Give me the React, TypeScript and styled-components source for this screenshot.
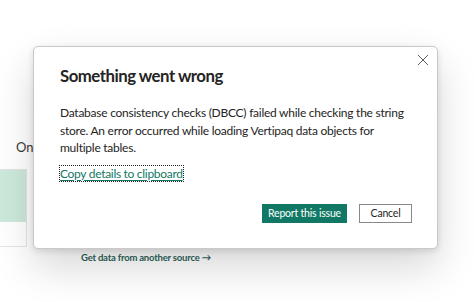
import React from "react";
import styled, { createGlobalStyle } from "styled-components";

const GlobalStyle = createGlobalStyle`
  html, body {
    margin: 0;
    padding: 0;
    background: #ffffff;
  }
  body {
    font-family: Lato, "Noto Sans", sans-serif;
    width: 474px;
    height: 302px;
    overflow: hidden;
  }
`;

const Screen = styled.div`
  position: relative;
  width: 474px;
  height: 302px;
  overflow: hidden;
  background: #ffffff;
`;

const BackPage = styled.div`
  display: flex;
  flex-direction: column;
  padding-top: 138px;
`;

const SectionLabel = styled.div`
  padding-left: 16px;
  font-size: 13px;
  line-height: 18px;
  color: #3b3b3b;
`;

const SourceCard = styled.div`
  margin-top: 13px;
  width: 26px;
  height: 76px;
  display: flex;
  flex-direction: column;
  border: 1px solid #e4e4e4;
  border-left: none;
  background: #ffffff;
`;

const CardFill = styled.div`
  height: 52px;
  background: #cce9db;
`;

const MoreLink = styled.div`
  margin-top: 5px;
  padding-left: 81px;
  font-size: 9.5px;
  letter-spacing: -0.2px;
  font-weight: 700;
  color: #2a5f57;
`;

const Backdrop = styled.div`
  position: absolute;
  inset: 0;
  padding: 46px 36px 0 33px;
`;

const Dialog = styled.div`
  position: relative;
  width: 405px;
  height: 203px;
  box-sizing: border-box;
  padding: 16px 25px 0 26px;
  background: #ffffff;
  border: 1px solid #c9c9c9;
  border-radius: 5px;
  box-shadow: 0 18px 40px rgba(0, 0, 0, 0.16), 0 2px 6px rgba(0, 0, 0, 0.12);
  display: flex;
  flex-direction: column;
`;

const CloseButton = styled.button`
  position: absolute;
  top: 5px;
  right: 6px;
  width: 16px;
  height: 16px;
  padding: 0;
  border: none;
  background: none;
  display: flex;
  align-items: center;
  justify-content: center;
`;

const Title = styled.h1`
  margin: 0;
  font-size: 16.8px;
  letter-spacing: -0.5px;
  line-height: 26px;
  font-weight: 700;
  color: #252423;
`;

const Message = styled.p`
  margin: 15px 0 0 0;
  font-size: 12px;
  letter-spacing: -0.25px;
  line-height: 17.5px;
  color: #252423;
  width: 350px;
`;

const CopyLink = styled.a`
  align-self: flex-start;
  margin-top: 9px;
  font-size: 12px;
  letter-spacing: -0.3px;
  line-height: 15px;
  color: #117865;
  text-decoration: underline;
  text-underline-offset: 2px;
  outline: 1px dotted #222;
  outline-offset: 0;
`;

const Footer = styled.div`
  margin-top: 23px;
  display: flex;
  justify-content: flex-end;
  gap: 12px;
`;

const Button = styled.button<{ $primary?: boolean }>`
  height: 19px;
  width: ${(p) => (p.$primary ? "85px" : "53px")};
  box-sizing: border-box;
  padding: 0;
  font-family: inherit;
  font-size: 10.5px;
  letter-spacing: -0.2px;
  border-radius: 0;
  border: 1px solid ${(p) => (p.$primary ? "#117865" : "#8a8886")};
  background: ${(p) => (p.$primary ? "#117865" : "#ffffff")};
  color: ${(p) => (p.$primary ? "#ffffff" : "#252423")};
`;

export default function App() {
  return (
    <Screen>
      <GlobalStyle />
      <BackPage>
        <SectionLabel>Once</SectionLabel>
        <SourceCard>
          <CardFill />
        </SourceCard>
        <MoreLink>Get data from another source →</MoreLink>
      </BackPage>
      <Backdrop>
        <Dialog>
          <CloseButton aria-label="Close">
            <svg width="12" height="12" viewBox="0 0 12 12">
              <path d="M1 1L11 11M11 1L1 11" stroke="#605e5c" strokeWidth="1" />
            </svg>
          </CloseButton>
          <Title>Something went wrong</Title>
          <Message>
            Database consistency checks (DBCC) failed while checking the string
            store. An error occurred while loading Vertipaq data objects for
            multiple tables.
          </Message>
          <CopyLink>Copy details to clipboard</CopyLink>
          <Footer>
            <Button $primary>Report this issue</Button>
            <Button>Cancel</Button>
          </Footer>
        </Dialog>
      </Backdrop>
    </Screen>
  );
}
